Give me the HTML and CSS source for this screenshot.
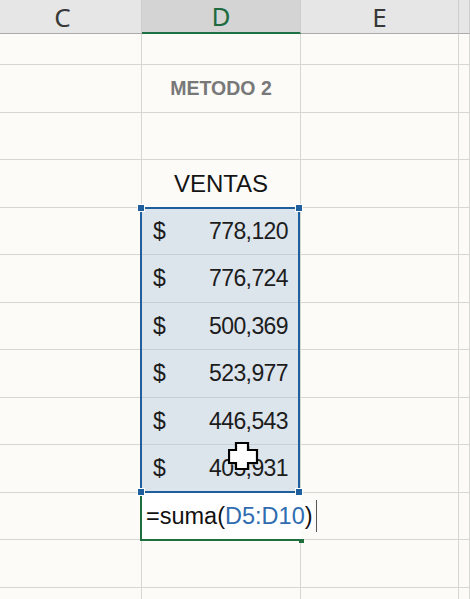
FILE: index.html
```html
<!DOCTYPE html>
<html lang="es">
<head>
    <meta charset="UTF-8">
    <meta name="viewport" content="width=device-width, initial-scale=1.0">
    <link rel="stylesheet" href="styles.css">
    <title>Metodo 2 - Ventas</title>
</head>
<body>
    <div class="sheet">
        <div class="grid">
            <!-- column headers -->
            <div class="hdr hdr-c">C</div>
            <div class="hdr active">D</div>
            <div class="hdr">E</div>
            <div class="hdr"></div>

            <div class="cell"></div><div class="cell"></div><div class="cell"></div><div class="cell"></div>

            <div class="cell"></div><div class="cell title">METODO 2</div><div class="cell"></div><div class="cell"></div>

            <div class="cell"></div><div class="cell"></div><div class="cell"></div><div class="cell"></div>

            <div class="cell"></div><div class="cell heading">VENTAS</div><div class="cell"></div><div class="cell"></div>

            <div class="cell"></div><div class="cell sel"><span>$</span><span>778,120</span></div><div class="cell"></div><div class="cell"></div>
            <div class="cell"></div><div class="cell sel"><span>$</span><span>776,724</span></div><div class="cell"></div><div class="cell"></div>
            <div class="cell"></div><div class="cell sel"><span>$</span><span>500,369</span></div><div class="cell"></div><div class="cell"></div>
            <div class="cell"></div><div class="cell sel"><span>$</span><span>523,977</span></div><div class="cell"></div><div class="cell"></div>
            <div class="cell"></div><div class="cell sel"><span>$</span><span>446,543</span></div><div class="cell"></div><div class="cell"></div>
            <div class="cell"></div><div class="cell sel last"><span>$</span><span>405,931</span></div><div class="cell"></div><div class="cell"></div>

            <div class="cell"></div><div class="cell"></div><div class="cell"></div><div class="cell"></div>
            <div class="cell"></div><div class="cell"></div><div class="cell"></div><div class="cell"></div>
            <div class="cell"></div><div class="cell"></div><div class="cell"></div><div class="cell"></div>
        </div>

        <!-- same grid laid over the cells: selection and editor -->
        <div class="grid overlay">
            <div class="selection">
                <span class="handle tl"></span>
                <span class="handle tr"></span>
                <span class="handle bl"></span>
                <span class="handle br"></span>
            </div>

            <div class="editor">
                <span class="formula">=suma(<span class="ref">D5:D10</span>)</span><span class="caret"></span>
            </div>
        </div>

        <svg class="cursor" width="31" height="29" viewBox="0 0 31 29">
            <polygon points="10,4 22,4 22,11 30,11 30,23 22,23 22,28 10,28 10,23 3,23 3,11 10,11" fill="#9a9a9a" opacity="0.5"/>
            <polygon points="8,1 20,1 20,8 29,8 29,21 20,21 20,27 8,27 8,21 1,21 1,8 8,8" fill="#fff" stroke="#000" stroke-width="2.2"/>
        </svg>
    </div>
</body>
</html>
```

FILE: styles.css
```css
body {
    margin: 0;
    overflow: hidden;
    background-color: #fcfbf8;
    font-family: "Liberation Sans", Arial, sans-serif;
}

.sheet {
    position: relative;
    height: 599px;
    overflow: hidden;
}

.grid {
    display: grid;
    grid-template-columns: 142px 159px 158px 1fr;
    grid-template-rows: 34px 31px repeat(6, 48px 47px);
    grid-auto-rows: 48px;
}

.overlay {
    position: absolute;
    inset: 0;
    pointer-events: none;
}

.hdr,
.cell {
    box-sizing: border-box;
    border-right: 1px solid #d6d6d2;
    border-bottom: 1px solid #d6d6d2;
}

.hdr {
    display: flex;
    align-items: center;
    justify-content: center;
    background-color: #e6e6e6;
    border-right-color: #cdcdcd;
    border-bottom: 1px solid #ababab;
    font-family: "Noto Sans", "Open Sans", sans-serif;
    font-size: 26px;
    line-height: 30px;
    color: #383838;
}

.hdr-c {
    padding-right: 16px;
}

.hdr.active {
    background-color: #d4d4d4;
    border-bottom: 2px solid #1e7145;
    color: #1e6b3f;
}

.cell {
    display: flex;
    align-items: center;
    justify-content: center;
}

.title {
    font-weight: bold;
    font-size: 19.5px;
    color: #787878;
}

.heading {
    font-size: 24px;
    color: #141414;
}

.sel {
    justify-content: space-between;
    padding: 0 12px 0 11px;
    background-color: #dce4ec;
    border-bottom-color: #c7cfd8;
    font-size: 23px;
    letter-spacing: -0.6px;
    color: #1c1c1c;
}

.sel.last {
    border-bottom-color: #d6d6d2;
}

.selection {
    grid-column: 2;
    grid-row: 6 / 12;
    margin: -1px 1px 0 -2px;
    border: 2px solid #1f5f9e;
    position: relative;
    z-index: 3;
}

.handle {
    position: absolute;
    width: 6px;
    height: 6px;
    background-color: #1f5f9e;
    border: 1px solid #fff;
}

.handle.tl { left: -5px; top: -5px; }
.handle.tr { right: -5px; top: -5px; }
.handle.bl { left: -5px; bottom: -5px; }
.handle.br { right: -5px; bottom: -5px; }

.editor {
    grid-column: 2;
    grid-row: 12;
    margin: -2px 0 -1px -2px;
    border: 2px solid #1f6e3e;
    border-right: none;
    background-color: #fff;
    display: flex;
    align-items: center;
    padding-left: 4px;
    white-space: nowrap;
    position: relative;
    z-index: 2;
    font-size: 23.5px;
    color: #111;
}

.editor::after {
    content: "";
    position: absolute;
    right: -3px;
    bottom: -4px;
    width: 5px;
    height: 4px;
    background-color: #1f6e3e;
}

.formula {
    background-color: #fff;
}

.ref {
    color: #2f6cb0;
}

.caret {
    flex: none;
    width: 1px;
    height: 32px;
    margin-left: 3px;
    background-color: #555;
}

.cursor {
    position: absolute;
    left: 228px;
    top: 442px;
    z-index: 5;
}
```
